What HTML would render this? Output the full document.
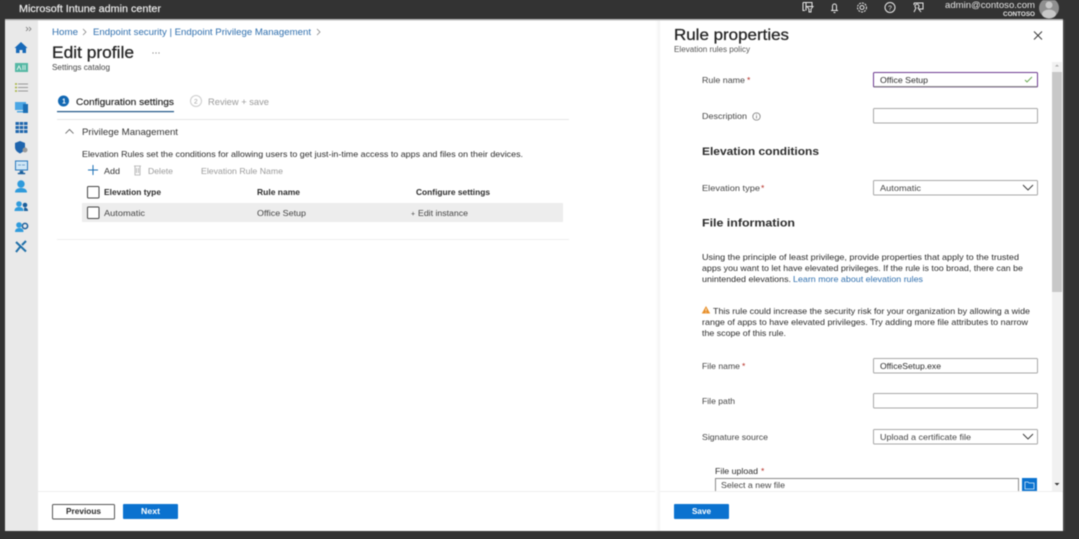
<!DOCTYPE html>
<html><head><meta charset="utf-8"><title>Microsoft Intune admin center</title>
<style>
html,body{margin:0;padding:0;background:#333;width:1079px;height:539px;overflow:hidden}
svg{display:block;position:absolute;left:0;top:0;filter:blur(.42px)}
text{font-family:"Liberation Sans",sans-serif;font-size:8.5px;fill:#2b2b2b;white-space:pre}
.b{font-weight:bold}
.g{fill:#9a9a9a}
.l{fill:#2f6fae}
.r{fill:#b3261e}
</style></head><body>
<svg width="1079" height="539" viewBox="0 0 1079 539" xmlns="http://www.w3.org/2000/svg">
<rect width="1079" height="539" fill="#333"/>
<rect x="5" y="20" width="1058" height="511" fill="#fff"/>
<rect x="1063" y="20" width="2" height="511" fill="#444"/>
<rect x="5" y="20" width="33" height="511" fill="#e9e9e9"/>
<rect x="5" y="19" width="1058" height="1.5" fill="#bbb"/>

<!-- header -->
<text x="19" y="12" textLength="142" lengthAdjust="spacingAndGlyphs" style="font-size:10px;fill:#f2f2f2;stroke:#f2f2f2;stroke-width:.15">Microsoft Intune admin center</text>
<g fill="none" stroke="#e8e8e8" stroke-width="1">
 <path d="M803 2.500h9v4M803 2.500v8h2M806 2.500v8M807 6.500h6l-2 2.500v3h-2v-3z"/>
 <path d="M831 10.500h7M832.500 10v-4a2 2 0 0 1 4 0v4M833.500 12.500h2"/>
 <circle cx="862" cy="7.500" r="2"/><circle cx="862" cy="7.500" r="4.500" stroke-dasharray="2 1"/>
 <circle cx="890" cy="7.500" r="5"/>
 <path d="M914 3h9v6h-4M914 3v2M914 12l2-4a2 2 0 1 1 2 0l3 4"/>
</g>
<text x="888" y="10.500" style="font-size:7px;fill:#e8e8e8">?</text>
<text x="945" y="8" textLength="90" lengthAdjust="spacingAndGlyphs" style="font-size:9.500px;fill:#e4e4e4">admin@contoso.com</text>
<text x="1003" y="16" textLength="32" lengthAdjust="spacingAndGlyphs" class="b" style="font-size:6px;fill:#e4e4e4">CONTOSO</text>
<clipPath id="av"><rect x="1038" y="0" width="22" height="19"/></clipPath>
<g clip-path="url(#av)"><circle cx="1049" cy="8" r="10" fill="#8f8f8f"/><circle cx="1049" cy="5" r="3.500" fill="#c8c8c8"/><ellipse cx="1049" cy="14" rx="7" ry="4.500" fill="#c8c8c8"/></g>

<!-- sidebar -->
<path d="M26 27l2 2-2 2M29 27l2 2-2 2" fill="none" stroke="#777" stroke-width=".8"/>
<path d="M21 42l6.500 6h-1.500v5h-3.500v-3h-3v3H16v-5h-1.500z" fill="#1769b8"/>
<rect x="15" y="63" width="13" height="9" fill="#55b8a4"/><path d="M17 70l2-4 2 4M23 65v5M25 65v5" stroke="#e8f5f2" fill="none" stroke-width=".9"/>
<g stroke-width="1"><path d="M18 84h10M18 87.500h10M18 91h10" stroke="#999"/><path d="M15 84h2M15 87.500h2M15 91h2" stroke="#a2b13a" stroke-width="1.400"/></g>
<rect x="15" y="102" width="11" height="8" fill="#4ba6e4"/><rect x="23" y="104" width="5" height="9" fill="#1b6fb5"/><rect x="17" y="111" width="6" height="1.500" fill="#4ba6e4"/>
<g fill="#2067ad"><rect x="15.500" y="122" width="3.500" height="3"/><rect x="19.700" y="122" width="3.500" height="3"/><rect x="24" y="122" width="3.500" height="3"/><rect x="15.500" y="126" width="3.500" height="3"/><rect x="19.700" y="126" width="3.500" height="3"/><rect x="24" y="126" width="3.500" height="3"/><rect x="15.500" y="130" width="3.500" height="3"/><rect x="19.700" y="130" width="3.500" height="3"/><rect x="24" y="130" width="3.500" height="3"/></g>
<path d="M20 141l5 2v4c0 3-2 5-5 6.500-3-1.500-5-3.500-5-6.500v-4z" fill="#1e64ad"/><circle cx="25" cy="150" r="2.500" fill="#9a9a9a"/>
<rect x="15.500" y="161" width="12" height="9" fill="#cfe6f6" stroke="#2878bd"/><path d="M18 165h3M22 165h3M20 171h3v2h2v1h-7v-1h2z" fill="#1a5f9c" stroke="#1a5f9c" stroke-width=".5"/>
<circle cx="21" cy="184" r="3.700" fill="#2f9bdc"/><path d="M15 192.500c0-3.500 3-4.500 6-4.500s6 1 6 4.500z" fill="#2f9bdc"/>
<circle cx="19" cy="204" r="2.800" fill="#2f9bdc"/><circle cx="25" cy="205" r="2.300" fill="#1a5f9c"/><path d="M14.500 211c0-3 2-4 4.500-4s4.500 1 4.500 4z" fill="#2f9bdc"/><path d="M24 211c0-2.500 0-3.500 1-3.500s3 1 3 3.500z" fill="#1a5f9c"/>
<circle cx="19" cy="225" r="2.800" fill="#2f9bdc"/><path d="M15 232c0-3 2-4 4.500-4s4 1 4 4z" fill="#2f9bdc"/><circle cx="25" cy="226" r="2.600" fill="none" stroke="#1a5f9c" stroke-width="1.500"/>
<path d="M16 242l10 9.500M26 241l-4 4M20 247l-4 5" stroke="#1f6fa8" stroke-width="2" fill="none"/>

<!-- main -->
<text x="52" y="35" textLength="26" lengthAdjust="spacingAndGlyphs" class="l" style="font-size:9.500px">Home</text>
<path d="M83 29l3 3-3 3" fill="none" stroke="#777" stroke-width=".7"/>
<text x="93" y="35" textLength="218" lengthAdjust="spacingAndGlyphs" class="l" style="font-size:9.500px">Endpoint security | Endpoint Privilege Management</text>
<path d="M317 29l3 3-3 3" fill="none" stroke="#777" stroke-width=".7"/>
<text x="52" y="58" textLength="82" lengthAdjust="spacingAndGlyphs" style="font-size:17px;fill:#222;stroke:#222;stroke-width:.25">Edit profile</text>
<g fill="#777"><circle cx="153" cy="53" r=".6"/><circle cx="156" cy="53" r=".6"/><circle cx="159" cy="53" r=".6"/></g>
<text x="52" y="70" textLength="58" lengthAdjust="spacingAndGlyphs" style="font-size:8px;fill:#444">Settings catalog</text>

<circle cx="63.500" cy="101" r="5.500" fill="#1268b3"/><text x="62" y="103.500" style="font-size:7px;fill:#fff" class="b">1</text>
<text x="76" y="105" textLength="98" lengthAdjust="spacingAndGlyphs" style="font-size:9.500px;fill:#222;stroke:#222;stroke-width:.15">Configuration settings</text>
<rect x="57" y="111" width="117" height="1.200" fill="#1c5485"/>
<circle cx="196" cy="101" r="5.500" fill="#fff" stroke="#ccc"/><text x="194" y="103.500" class="g" style="font-size:6.500px">2</text>
<text x="208" y="105" textLength="61" lengthAdjust="spacingAndGlyphs" class="g" style="font-size:9.500px">Review + save</text>
<rect x="57" y="119" width="512" height="1" fill="#e6e6e6"/>

<path d="M65.500 133.500l4-4 4 4" fill="none" stroke="#555" stroke-width=".8"/>
<text x="82" y="135" textLength="96" lengthAdjust="spacingAndGlyphs" style="font-size:9.500px;fill:#333">Privilege Management</text>
<text x="82" y="157" textLength="441" lengthAdjust="spacingAndGlyphs">Elevation Rules set the conditions for allowing users to get just-in-time access to apps and files on their devices.</text>
<path d="M93 165v10M88 170h10" stroke="#1a6fb5" stroke-width="1" fill="none"/>
<text x="104" y="174" textLength="16" lengthAdjust="spacingAndGlyphs" style="font-size:8.500px;fill:#333">Add</text>
<path d="M134 166h7M135 166v9h5v-9M136.500 168v5M138.500 168v5" fill="none" stroke="#aaa" stroke-width=".8"/>
<text x="148" y="174" textLength="25" lengthAdjust="spacingAndGlyphs" class="g">Delete</text>
<text x="201" y="174" textLength="82" lengthAdjust="spacingAndGlyphs" class="g">Elevation Rule Name</text>

<rect x="87.500" y="186.500" width="11.500" height="11.500" rx="1" fill="#fff" stroke="#444"/>
<text x="104" y="195" textLength="57" lengthAdjust="spacingAndGlyphs" class="b">Elevation type</text>
<text x="257" y="195" textLength="43" lengthAdjust="spacingAndGlyphs" class="b">Rule name</text>
<text x="416" y="195" textLength="74" lengthAdjust="spacingAndGlyphs" class="b">Configure settings</text>
<rect x="82" y="203" width="481" height="19" fill="#ededed"/>
<rect x="87.500" y="207" width="11.500" height="11.500" rx="1" fill="#fff" stroke="#444"/>
<text x="104" y="216" textLength="41" lengthAdjust="spacingAndGlyphs" style="font-size:8.500px;fill:#444">Automatic</text>
<text x="257" y="216" textLength="49" lengthAdjust="spacingAndGlyphs" style="font-size:8.500px;fill:#444">Office Setup</text>
<text x="411" y="216" style="font-size:7px;fill:#444">+</text>
<text x="418" y="216" textLength="50" lengthAdjust="spacingAndGlyphs" style="font-size:8.500px;fill:#444">Edit instance</text>
<rect x="57" y="239" width="512" height="1" fill="#eeeeee"/>

<rect x="38" y="491" width="622" height="1" fill="#eeeeee"/>
<rect x="52.500" y="504.500" width="62" height="14.500" rx="1" fill="#fff" stroke="#555"/>
<text x="66" y="514" textLength="35" lengthAdjust="spacingAndGlyphs" class="b">Previous</text>
<rect x="123" y="504" width="55" height="15" rx="1" fill="#0b72cf"/>
<text x="141" y="514" textLength="19" lengthAdjust="spacingAndGlyphs" class="b" style="fill:#fff">Next</text>

<!-- panel -->
<defs><linearGradient id="sh" x1="0" x2="1"><stop offset="0" stop-color="#fff"/><stop offset="1" stop-color="#f3f3f3"/></linearGradient></defs>
<rect x="655" y="20.500" width="5" height="510.500" fill="url(#sh)"/>
<rect x="660" y="20.500" width="403" height="510.500" fill="#fff"/>
<text x="674" y="40" textLength="115" lengthAdjust="spacingAndGlyphs" style="font-size:16px;fill:#222;stroke:#222;stroke-width:.25">Rule properties</text>
<text x="674" y="52" textLength="76" lengthAdjust="spacingAndGlyphs" style="font-size:8px;fill:#555">Elevation rules policy</text>
<path d="M1034 31.500l8 8M1042 31.500l-8 8" stroke="#333" stroke-width=".9" fill="none"/>

<rect x="1052" y="62" width="10" height="429" fill="#f1f1f1"/>
<rect x="1052" y="72" width="10" height="220" fill="#c8c8c8"/>
<path d="M1055 66.500l2-2 2 2z" fill="#aaa"/><path d="M1054.500 483h5l-2.500 2.500z" fill="#333"/>

<g fill="#fff" stroke="#a8a8a8">
 <rect x="873.500" y="108.500" width="164" height="14.500" rx="1"/>
 <rect x="873.500" y="180.500" width="164" height="14.500" rx="1"/>
 <rect x="873.500" y="358.500" width="164" height="14.500" rx="1"/>
 <rect x="873.500" y="393.500" width="164" height="14.500" rx="1"/>
 <rect x="873.500" y="429.500" width="164" height="14.500" rx="1"/>
</g>
<rect x="873.500" y="72.500" width="164" height="14.500" rx="1" fill="#fff" stroke="#6d3a91"/>
<rect x="874" y="86" width="163" height="1.200" fill="#8f8f8f"/>

<text x="702" y="83" textLength="43" lengthAdjust="spacingAndGlyphs" style="fill:#444">Rule name</text>
<text x="747" y="83" class="r">*</text>
<text x="880" y="83" textLength="48" lengthAdjust="spacingAndGlyphs">Office Setup</text>
<path d="M1025 80l2 2 5-5" fill="none" stroke="#62a54a" stroke-width=".9"/>

<text x="702" y="119" textLength="45" lengthAdjust="spacingAndGlyphs" style="fill:#444">Description</text>
<circle cx="756.500" cy="116.500" r="3.700" fill="none" stroke="#666" stroke-width=".7"/><path d="M756.500 115.500v3M756.500 114v.8" stroke="#666" stroke-width=".7"/>

<text x="702" y="155" textLength="117" lengthAdjust="spacingAndGlyphs" class="b" style="font-size:11px">Elevation conditions</text>
<text x="702" y="191" textLength="58" lengthAdjust="spacingAndGlyphs" style="fill:#444">Elevation type</text>
<text x="761" y="191" class="r">*</text>
<text x="880" y="191" textLength="41" lengthAdjust="spacingAndGlyphs" style="fill:#444">Automatic</text>
<path d="M1023 185l5 5 5-5" fill="none" stroke="#333" stroke-width=".9"/>

<text x="702" y="226.500" textLength="93" lengthAdjust="spacingAndGlyphs" class="b" style="font-size:11px">File information</text>
<text x="702" y="260" textLength="317" lengthAdjust="spacingAndGlyphs">Using the principle of least privilege, provide properties that apply to the trusted</text>
<text x="702" y="271" textLength="321" lengthAdjust="spacingAndGlyphs">apps you want to let have elevated privileges. If the rule is too broad, there can be</text>
<text x="702" y="282" textLength="89" lengthAdjust="spacingAndGlyphs">unintended elevations.</text>
<text x="793" y="282" textLength="130" lengthAdjust="spacingAndGlyphs" class="l">Learn more about elevation rules</text>

<path d="M706 306l4.200 7.500h-8.400z" fill="#e8912d"/><path d="M706 308.500v2.500M706 312v.7" stroke="#fff" stroke-width=".7"/>
<text x="713" y="314" textLength="317" lengthAdjust="spacingAndGlyphs">This rule could increase the security risk for your organization by allowing a wide</text>
<text x="702" y="325" textLength="326" lengthAdjust="spacingAndGlyphs">range of apps to have elevated privileges. Try adding more file attributes to narrow</text>
<text x="702" y="336" textLength="84" lengthAdjust="spacingAndGlyphs">the scope of this rule.</text>

<text x="702" y="369" textLength="38" lengthAdjust="spacingAndGlyphs" style="fill:#444">File name</text>
<text x="742" y="369" class="r">*</text>
<text x="880" y="369" textLength="61" lengthAdjust="spacingAndGlyphs">OfficeSetup.exe</text>
<text x="702" y="404" textLength="33" lengthAdjust="spacingAndGlyphs" style="fill:#444">File path</text>
<text x="702" y="440" textLength="66" lengthAdjust="spacingAndGlyphs" style="fill:#444">Signature source</text>
<text x="880" y="440" textLength="91" lengthAdjust="spacingAndGlyphs" style="fill:#444">Upload a certificate file</text>
<path d="M1023 434l5 5 5-5" fill="none" stroke="#333" stroke-width=".9"/>

<text x="715" y="474" textLength="43" lengthAdjust="spacingAndGlyphs">File upload</text>
<text x="761" y="474" class="r">*</text>
<rect x="715.500" y="478.500" width="303" height="14" fill="#fff" stroke="#8a8a8a"/>
<text x="721" y="488" textLength="64" lengthAdjust="spacingAndGlyphs" style="fill:#444">Select a new file</text>
<rect x="1022" y="478" width="15" height="14" fill="#0b72cf"/>
<path d="M1025 482h3l1 1h5v6h-9z" fill="none" stroke="#d6ebfb" stroke-width=".8"/>

<rect x="660" y="491" width="392" height="40" fill="#fff"/>
<rect x="1052" y="491" width="11" height="40" fill="#fff"/>
<rect x="660" y="491" width="403" height="1" fill="#eeeeee"/>
<rect x="674" y="504" width="55" height="15" rx="1" fill="#0b72cf"/>
<text x="692" y="514" textLength="19" lengthAdjust="spacingAndGlyphs" class="b" style="fill:#fff">Save</text>
</svg>
</body></html>
